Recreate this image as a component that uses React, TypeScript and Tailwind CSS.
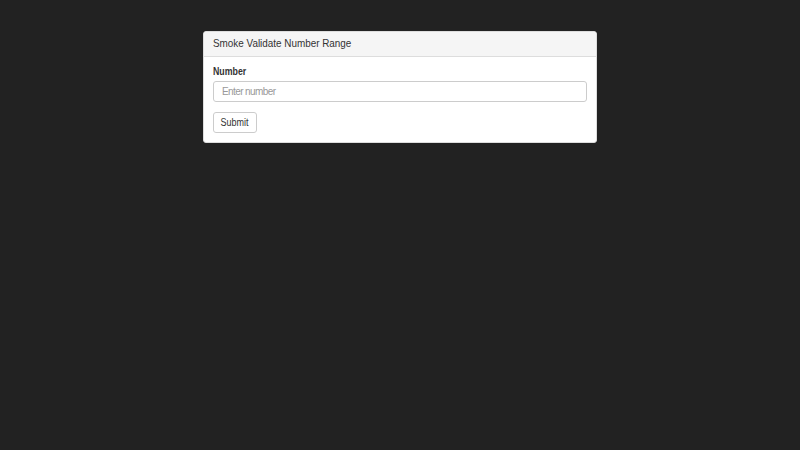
export default function App() {
  return (
    <div
      className="min-h-[450px] w-full bg-[#222222] pt-[31px]"
      style={{ fontFamily: '"Liberation Sans", Arial, sans-serif' }}
    >
      <div className="mx-auto w-[394px] overflow-hidden rounded-[3px] border border-[#dddddd] bg-white">
        <div className="flex h-[25px] items-center border-b border-[#dddddd] bg-[#f5f5f5] px-[9px] text-[11.5px] text-[#333333]">
          <span className="inline-block origin-left scale-x-[0.86] whitespace-nowrap">Smoke Validate Number Range</span>
        </div>
        <div className="px-[9px] pt-[8px] pb-[9px]">
          <div className="mb-[2px] text-[10px] leading-[14px] font-bold text-[#333333]">
            <span className="inline-block origin-left scale-x-[0.88] whitespace-nowrap">Number</span>
          </div>
          <input
            className="block h-[21px] w-full rounded-[3px] border border-[#cccccc] px-[8px] text-[10px] tracking-[-0.6px] text-[#555555] placeholder:text-[#999999] outline-none"
            placeholder="Enter number"
          />
          <button className="mt-[10px] flex h-[21px] w-[44px] items-center justify-center rounded-[3px] border border-[#cccccc] bg-white text-[10px] text-[#333333]">
            <span className="inline-block origin-center scale-x-[0.9] whitespace-nowrap">Submit</span>
          </button>
        </div>
      </div>
    </div>
  );
}
